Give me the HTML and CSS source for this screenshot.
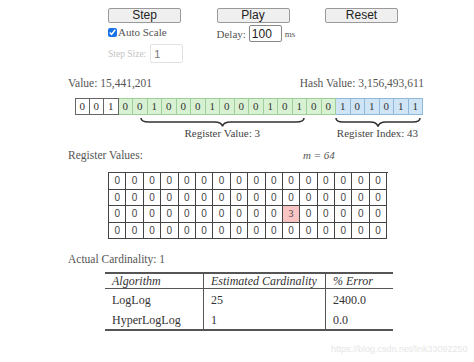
FILE: index.html
```html
<!DOCTYPE html>
<html lang="en">
<head>
    <meta charset="UTF-8">
    <title>HyperLogLog demo</title>
    <link rel="stylesheet" href="styles.css">
</head>
<body>
    <div class="page">
        <div class="controls">
            <div class="col">
                <button class="btn">Step</button>
                <label class="check"><input type="checkbox" checked>Auto Scale</label>
                <div class="step-size">
                    <span>Step Size:</span>
                    <input type="text" value="1" disabled>
                </div>
            </div>
            <div class="col">
                <button class="btn">Play</button>
                <div class="delay">
                    <span>Delay:</span>
                    <input type="text" value="100">
                    <span class="ms">ms</span>
                </div>
            </div>
            <div class="col">
                <button class="btn">Reset</button>
            </div>
        </div>

        <div class="info">
            <span>Value: 15,441,201</span>
            <span>Hash Value: 3,156,493,611</span>
        </div>

        <div class="bits">
            <span class="bit">0</span><span class="bit">0</span><span class="bit">1</span>
            <span class="bit val">0</span><span class="bit val">0</span><span class="bit val">1</span><span class="bit val">0</span><span class="bit val">0</span><span class="bit val">0</span><span class="bit val">1</span><span class="bit val">0</span><span class="bit val">0</span><span class="bit val">0</span><span class="bit val">1</span><span class="bit val">0</span><span class="bit val">1</span><span class="bit val">0</span><span class="bit val">0</span>
            <span class="bit idx">1</span><span class="bit idx">0</span><span class="bit idx">1</span><span class="bit idx">0</span><span class="bit idx">1</span><span class="bit idx">1</span>
        </div>
        <div class="notes">
            <div class="note note-value">
                <svg width="165" height="9" viewBox="0 0 165 9"><path d="M1 0 Q1 4 9 4 L74 4 Q82 4 82.5 8.5 Q83 4 91 4 L156 4 Q164 4 164 0" /></svg>
                <span>Register Value: 3</span>
            </div>
            <div class="note note-index">
                <svg width="86" height="9" viewBox="0 0 86 9"><path d="M1 0 Q1 4 8 4 L35 4 Q42 4 43 8.5 Q44 4 51 4 L78 4 Q85 4 85 0" /></svg>
                <span>Register Index: 43</span>
            </div>
        </div>

        <div class="reg-head">
            <span class="reg-title">Register Values:</span>
            <span class="m">m = 64</span>
        </div>

        <div class="registers" id="registers"></div>

        <div class="actual">Actual Cardinality: 1</div>

        <table class="results">
            <thead>
                <tr><th>Algorithm</th><th>Estimated Cardinality</th><th>% Error</th></tr>
            </thead>
            <tbody>
                <tr><td>LogLog</td><td>25</td><td>2400.0</td></tr>
                <tr><td>HyperLogLog</td><td>1</td><td>0.0</td></tr>
            </tbody>
        </table>
    </div>
    <div class="watermark">https://blog.csdn.net/link33092250</div>

    <script>
        // 64 registers, only index 43 is set
        const box = document.getElementById('registers');
        for (let i = 0; i < 64; i++) {
            const cell = document.createElement('span');
            cell.className = 'reg' + (i === 42 ? ' hit' : '');
            cell.textContent = i === 42 ? '3' : '0';
            box.appendChild(cell);
        }
    </script>
</body>
</html>
```
FILE: styles.css
```css
body {
    margin: 0;
    background: #fff;
    font-family: "Liberation Serif", serif;
    color: #444;
}
.page {
    width: 356px;
    margin-left: 68px;
}

/* controls */
.controls {
    display: flex;
    height: 54px;
    padding-top: 8px;
    margin-left: 40px;
}
.col {
    flex: none;
    width: 108.5px;
}
.btn {
    display: block;
    width: 73px;
    height: 15px;
    padding: 0;
    font: 12px/13px "Liberation Sans", sans-serif;
    color: #222;
    background: #efefef;
    border: 1px solid #9a9a9a;
    border-radius: 2px;
}
.check {
    display: flex;
    align-items: center;
    margin-top: 4px;
    font-size: 11px;
    line-height: 10px;
    color: #555;
}
.check input {
    width: 9px;
    height: 9px;
    margin: 0 1px 0 0;
    accent-color: #1a73e8;
}
.step-size {
    display: flex;
    align-items: center;
    margin-top: 7px;
    font-size: 9.5px;
    color: #c4c4c4;
}
.step-size input {
    width: 33px;
    height: 19px;
    margin-left: 4px;
    padding: 0 3px;
    box-sizing: border-box;
    font: 11px "Liberation Sans", sans-serif;
    color: #777;
    background: #fff;
    border: 1px solid #e2e2e2;
    border-radius: 2px;
}
.delay {
    display: flex;
    align-items: center;
    margin-top: 2px;
    font-size: 11px;
    color: #555;
}
.delay input {
    width: 33px;
    height: 17px;
    margin-left: 3px;
    padding: 0 2px;
    box-sizing: border-box;
    font: 12px "Liberation Sans", sans-serif;
    color: #222;
    border: 1px solid #888;
    border-radius: 2px;
}
.delay .ms {
    margin-left: 3px;
    font-size: 9px;
}

/* value / hash */
.info {
    display: flex;
    justify-content: space-between;
    margin-top: 14px;
    font-size: 11.5px;
    line-height: 14px;
    color: #555;
}

/* hash bits */
.bits {
    display: grid;
    grid-template-columns: repeat(24, 14.5px);
    height: 17px;
    margin: 8px 0 0 7px;
}
.bit {
    font-size: 11px;
    line-height: 15px;
    text-align: center;
    color: #333;
    border: 1px solid #666;
    border-left: none;
}
.bit:first-child {
    border-left: 1px solid #666;
}
.bit.val {
    background: #d8f1d2;
    border-color: #9fcf98;
}
.bit.idx {
    background: #cfe5f6;
    border-color: #8fb9da;
}
.notes {
    display: grid;
    grid-template-columns: repeat(24, 14.5px);
    margin: 3px 0 0 7px;
}
.note {
    display: flex;
    flex-direction: column;
    align-items: center;
}
.note svg {
    display: block;
}
.note path {
    fill: none;
    stroke: #333;
    stroke-width: 1.6;
}
.note span {
    font-size: 11px;
    line-height: 12px;
    color: #444;
    white-space: nowrap;
}
.note-value {
    grid-column: 4 / 19;
    margin-left: 22px;
    margin-right: 32px;
}
.note-index {
    grid-column: 19 / 25;
    margin-left: -2px;
    margin-right: 2px;
}

/* registers */
.reg-head {
    display: flex;
    margin-top: 9px;
    font-size: 11.5px;
    line-height: 14px;
    color: #555;
}
.reg-title {
    width: 235px;
}
.m {
    font-style: italic;
    font-size: 11px;
}
.registers {
    display: grid;
    grid-template-columns: repeat(16, 17.4px);
    grid-auto-rows: 16.5px;
    width: 279px;
    margin: 10px 0 0 40px;
    border-top: 1px solid #444;
    border-left: 1px solid #444;
}
.reg {
    font: 10px/16px "Liberation Sans", sans-serif;
    text-align: center;
    color: #444;
    border-right: 1px solid #444;
    border-bottom: 1px solid #444;
}
.reg.hit {
    background: #f8c4c4;
    font-family: "Liberation Serif", serif;
}

.actual {
    margin-top: 13px;
    font-size: 11.5px;
    line-height: 14px;
    color: #555;
}

/* results */
.results {
    width: 288px;
    margin: 6px 0 0 37px;
    border-collapse: collapse;
    font-size: 12px;
    line-height: 14px;
    color: #333;
    border-top: 2px solid #555;
    border-bottom: 2px solid #555;
}
.results th {
    height: 13px;
    padding: 0 0 0 7px;
    font-weight: normal;
    font-style: italic;
    text-align: left;
    border-bottom: 1px solid #555;
}
.results td {
    height: 19px;
    padding: 1px 0 0 7px;
}
.results th:nth-child(1) { width: 91px; }
.results th:nth-child(2) { width: 114px; }
.results th + th,
.results td + td {
    border-left: 1px solid #555;
}

.watermark {
    position: absolute;
    left: 331px;
    top: 344px;
    font: 9px "Liberation Sans", sans-serif;
    color: #e6e6e6;
    white-space: nowrap;
}
```
